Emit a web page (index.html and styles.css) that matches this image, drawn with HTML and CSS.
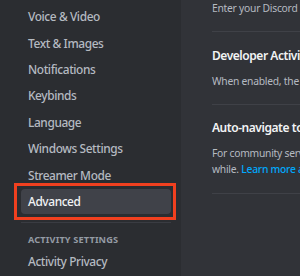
FILE: index.html
```html
<!DOCTYPE html>
<html lang="en">
<head>
  <meta charset="UTF-8">
  <title>User Settings - Advanced</title>
  <link rel="stylesheet" href="styles.css">
</head>
<body>

  <!-- SIDEBAR -->
  <nav class="sidebar">
    <div class="nav-item">Voice &amp; Video</div>
    <div class="nav-item">Text &amp; Images</div>
    <div class="nav-item">Notifications</div>
    <div class="nav-item">Keybinds</div>
    <div class="nav-item">Language</div>
    <div class="nav-item">Windows Settings</div>
    <div class="nav-item">Streamer Mode</div>
    <div class="nav-item selected">Advanced</div>
    <div class="nav-separator"></div>
    <div class="nav-header">Activity Settings</div>
    <div class="nav-item">Activity Privacy</div>

    <!-- annotation box round the selected item -->
    <div class="highlight-box"></div>
  </nav>

  <!-- CONTENT -->
  <main class="content">
    <div class="column">
      <p class="desc first">Enter your Discord application ID to enable test mode for that application.</p>
      <div class="divider"></div>

      <h3 class="title">Developer Activity Shelf</h3>
      <p class="desc">When enabled, the Activity Shelf will show all the activities from your applications.</p>
      <div class="divider"></div>

      <h3 class="title">Auto-navigate to server home</h3>
      <p class="desc two-lines">For community servers, automatically navigate to the Server Guide when visiting the server for the first time in a<br>while. <a href="#">Learn more about Server Guide.</a></p>
      <div class="divider"></div>
    </div>
  </main>

</body>
</html>
```

FILE: styles.css
```css
html, body {
  margin: 0;
  padding: 0;
  height: 100%;
  overflow: hidden;
  font-family: "Noto Sans", "Open Sans", sans-serif;
}

body {
  display: flex;
  background: #313338;
}

/* === SIDEBAR === */
.sidebar {
  position: relative;
  flex: 0 0 181px;
  box-sizing: border-box;
  padding: 4.2px 10px 0 21px;
  background: #2b2d31;
}

.nav-item {
  height: 25px;
  line-height: 25px;
  margin-bottom: 1.4px;
  padding-left: 7px;
  border-radius: 4px;
  font-size: 11.9px;
  font-weight: 500;
  letter-spacing: -0.4px;
  color: #b5bac1;
  white-space: nowrap;
}

.nav-item.selected {
  background: #404249;
  color: #f2f3f5;
}

.nav-separator {
  height: 1px;
  margin: 7.6px 0 11px;
  background: #3a3c42;
}

.nav-header {
  padding-left: 7px;
  margin-bottom: 3.5px;
  font-size: 9.2px;
  line-height: 12px;
  font-weight: 700;
  letter-spacing: 0.15px;
  text-transform: uppercase;
  color: #949ba4;
}

.highlight-box {
  position: absolute;
  left: 14px;
  top: 183px;
  width: 162px;
  height: 37px;
  box-sizing: border-box;
  border: 3px solid #f1401f;
}

/* === CONTENT === */
.content {
  flex: 1;
  overflow: hidden;
  padding-left: 31px;
}

.column {
  width: 520px;
}

.title {
  margin: 0;
  font-size: 12px;
  line-height: 16px;
  font-weight: 600;
  letter-spacing: -0.45px;
  color: #f2f3f5;
  white-space: nowrap;
}

.desc {
  margin: 10px 0 0;
  font-size: 10.3px;
  line-height: 14px;
  letter-spacing: -0.25px;
  color: #b5bac1;
  white-space: nowrap;
}

.desc.first { margin-top: 1px; }
.desc.two-lines { line-height: 15.5px; }

.desc a {
  color: #00a8fc;
  text-decoration: none;
  font-weight: 500;
}

.divider {
  height: 1px;
  margin: 16px 0 15.5px;
  background: #3f4147;
}
```
